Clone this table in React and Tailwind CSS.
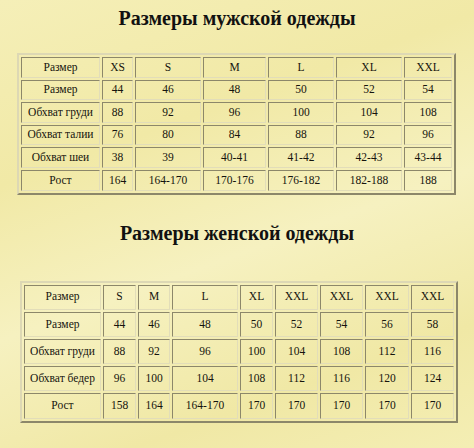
const men = {
  cols: ["w-[79px]", "w-[31px]", "w-[66px]", "w-[63px]", "w-[66px]", "w-[66px]", "w-[48px]"],
  rows: [
    ["Размер", "XS", "S", "M", "L", "XL", "XXL"],
    ["Размер", "44", "46", "48", "50", "52", "54"],
    ["Обхват груди", "88", "92", "96", "100", "104", "108"],
    ["Обхват талии", "76", "80", "84", "88", "92", "96"],
    ["Обхват шеи", "38", "39", "40-41", "41-42", "42-43", "43-44"],
    ["Рост", "164", "164-170", "170-176", "176-182", "182-188", "188"],
  ],
};

const women = {
  cols: ["w-[77px]", "w-[33px]", "w-[32px]", "w-[66px]", "w-[33px]", "w-[43px]", "w-[43px]", "w-[44px]", "w-[43px]"],
  rows: [
    ["Размер", "S", "M", "L", "XL", "XXL", "XXL", "XXL", "XXL"],
    ["Размер", "44", "46", "48", "50", "52", "54", "56", "58"],
    ["Обхват груди", "88", "92", "96", "100", "104", "108", "112", "116"],
    ["Обхват бедер", "96", "100", "104", "108", "112", "116", "120", "124"],
    ["Рост", "158", "164", "164-170", "170", "170", "170", "170", "170"],
  ],
};

function SizeTable({ data, rowH, className }) {
  return (
    <table
      className={`table-fixed border-separate border-spacing-[2px] border-2 border-t-[#ddd8b4] border-l-[#ddd8b4] border-b-[#8c876a] border-r-[#8c876a] ${className}`}
    >
      <colgroup>
        {data.cols.map((c, i) => (
          <col key={i} className={c} />
        ))}
      </colgroup>
      <tbody>
        {data.rows.map((row, r) => (
          <tr key={r}>
            {row.map((cell, c) => (
              <td
                key={c}
                className={`${rowH} p-0 text-center align-middle font-['Liberation_Serif',serif] text-[11.5px] leading-none text-[#15140e] border border-t-[#8c876a] border-l-[#8c876a] border-b-[#e2ddb9] border-r-[#e2ddb9]`}
              >
                {cell}
              </td>
            ))}
          </tr>
        ))}
      </tbody>
    </table>
  );
}

export default function App() {
  return (
    <div className="relative w-[474px] h-[448px] overflow-hidden bg-[#f3ecae] bg-[linear-gradient(160deg,#f5efb8_0%,#f1e9a6_30%,#f6f1c0_55%,#f0e8a5_80%,#f4eeb4_100%)] font-['Liberation_Serif',serif] text-[#111]">
      <h1 className="pt-[6px] text-center text-[20px] font-bold leading-[24px]">
        Размеры мужской одежды
      </h1>
      <SizeTable data={men} rowH="h-[20.6px]" className="ml-[17px] mt-[23px]" />

      <h2 className="mt-[26px] text-center text-[20px] font-bold leading-[24px]">
        Размеры женской одежды
      </h2>
      <SizeTable data={women} rowH="h-[25.2px]" className="ml-[20px] mt-[36px]" />
    </div>
  );
}
